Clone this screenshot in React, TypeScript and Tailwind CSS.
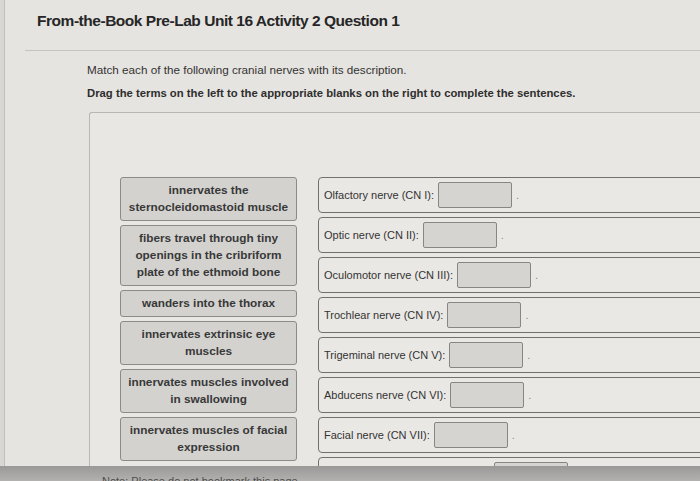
import React from "react";

const terms: string[][] = [
  ["innervates the", "sternocleidomastoid muscle"],
  ["fibers travel through tiny", "openings in the cribriform", "plate of the ethmoid bone"],
  ["wanders into the thorax"],
  ["innervates extrinsic eye", "muscles"],
  ["innervates muscles involved", "in swallowing"],
  ["innervates muscles of facial", "expression"],
];

const nerves: string[] = [
  "Olfactory nerve (CN I):",
  "Optic nerve (CN II):",
  "Oculomotor nerve (CN III):",
  "Trochlear nerve (CN IV):",
  "Trigeminal nerve (CN V):",
  "Abducens nerve (CN VI):",
  "Facial nerve (CN VII):",
  "Vestibulocochlear nerve (CN VIII):",
];

export default function App() {
  return (
    <div className="w-[700px] h-[481px] overflow-hidden flex flex-col bg-[#d9d7d3] font-['Liberation_Sans',Arial,sans-serif] text-[#2e2e2e]">
      <div className="flex-1 min-h-0 overflow-hidden ml-[4px] border-l border-[#c2c0bc] bg-[#e6e4e0] flex flex-col">
        <div className="pt-[12px] pl-[32px] text-[15.5px] leading-[18px] font-bold tracking-[-0.03em] text-[#262626] whitespace-nowrap">
          From-the-Book Pre-Lab Unit 16 Activity 2 Question 1
        </div>
        <div className="mt-[20px] ml-[20px] h-[1px] bg-[#c6c4c0]" />
        <div className="pl-[82px] flex flex-col flex-1 min-h-0">
          <p className="mt-[12px] text-[11.7px] leading-[14px] text-[#333] whitespace-nowrap">
            Match each of the following cranial nerves with its description.
          </p>
          <p className="mt-[9px] text-[11.3px] leading-[14px] font-bold text-[#2e2e2e] whitespace-nowrap">
            Drag the terms on the left to the appropriate blanks on the right to complete the sentences.
          </p>
          <div className="mt-[12px] ml-[2px] w-[700px] flex-1 border-l border-t border-[#b9b7b3] rounded-tl-[3px] bg-[#e9e7e3] pt-[64px] pl-[30px]">
            <div className="flex items-start gap-[21px]">
              <div className="w-[177px] shrink-0 flex flex-col gap-[4px]">
                {terms.map((lines, i) => (
                  <div
                    key={i}
                    className="border-[1.5px] border-[#8c8b88] rounded-[3px] bg-[#d3d2cf] py-[4px] text-center font-bold text-[11.8px] leading-[17px] text-[#383838] whitespace-nowrap"
                  >
                    {lines.map((l, j) => (
                      <div key={j}>{l}</div>
                    ))}
                  </div>
                ))}
              </div>
              <div className="w-[420px] shrink-0 flex flex-col gap-[4px]">
                {nerves.map((n, i) => (
                  <div
                    key={i}
                    className="h-[36px] border-[1.5px] border-[#72716e] rounded-[4px] bg-[#eae8e4] flex items-center pl-[5px] text-[11px] text-[#333] whitespace-nowrap"
                  >
                    <span>{n}</span>
                    <span className="ml-[4px] w-[74px] h-[26px] border-[1.5px] border-[#878683] rounded-[2px] bg-[#d5d4d1]" />
                    <span className="ml-[4px] text-[#888]">.</span>
                  </div>
                ))}
              </div>
            </div>
          </div>
        </div>
      </div>
      <div className="h-[15px] shrink-0 overflow-hidden bg-gradient-to-b from-[#9a9997] to-[#b2b1af] pl-[102px] pt-[8px] text-[11px] leading-[14px] text-[#4d4d4b] whitespace-nowrap">
        Note: Please do not bookmark this page
      </div>
    </div>
  );
}
